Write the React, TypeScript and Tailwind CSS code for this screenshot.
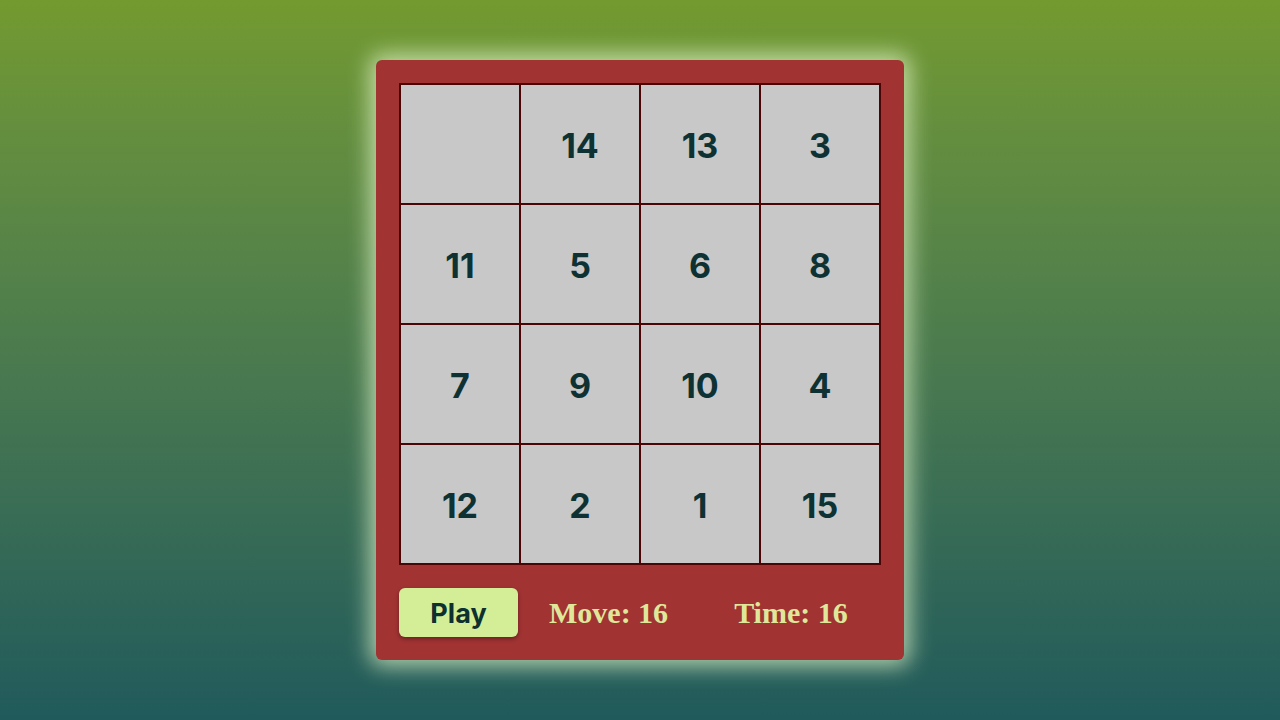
import React from 'react';

const tiles = [0, 14, 13, 3, 11, 5, 6, 8, 7, 9, 10, 4, 12, 2, 1, 15];

export default function App() {
  return (
    <div className="w-full h-[720px] flex items-center justify-center bg-gradient-to-b from-[#739a2f] to-[#205a5b]">
      <div className="w-[528px] h-[600px] bg-[#a13333] rounded-[6px] p-[23px] shadow-[0_0_22px_6px_rgba(225,245,200,0.75)]">
        <div className="grid grid-cols-4 border border-[#4a0606] w-[482px]">
          {tiles.map((n) => (
            <div
              key={n}
              className="w-[120px] h-[120px] border border-[#4a0606] bg-[#c8c8c8] flex items-center justify-center pt-[2px] text-[34px] font-bold text-[#0e3233] font-['Inter',sans-serif]"
            >
              {n === 0 ? '' : n}
            </div>
          ))}
        </div>
        <div className="mt-[23px] flex items-center">
          <button className="w-[119px] h-[49px] rounded-[6px] bg-[#d4ee97] shadow-[0_2px_4px_rgba(0,0,0,0.35)] pt-[3px] text-[27px] font-bold text-[#0d3030] font-['Inter',sans-serif]">
            Play
          </button>
          <span className="ml-[31px] text-[30px] font-bold text-[#dfe89a] font-['Liberation_Serif',serif]">Move: 16</span>
          <span className="ml-[66px] text-[30px] font-bold text-[#dfe89a] font-['Liberation_Serif',serif]">Time: 16</span>
        </div>
      </div>
    </div>
  );
}
